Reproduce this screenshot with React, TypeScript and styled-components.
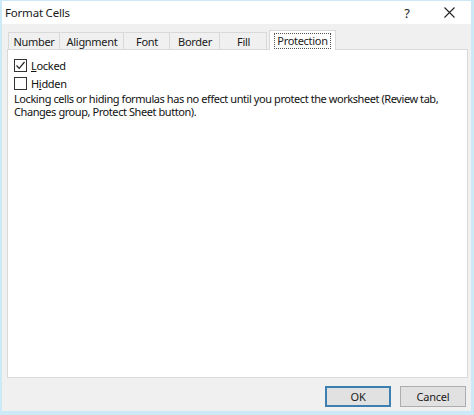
import React from 'react';
import styled, { createGlobalStyle } from 'styled-components';

const GlobalStyle = createGlobalStyle`
    html, body {
        margin: 0;
        padding: 0;
        background: #cbe9f6;
    }
    body {
        font-family: "Noto Sans", "Liberation Sans", sans-serif;
    }
`;

const tabs = [
    { label: 'Number', width: 52 },
    { label: 'Alignment', width: 64 },
    { label: 'Font', width: 46 },
    { label: 'Border', width: 50 },
    { label: 'Fill', width: 47 },
    { label: 'Protection', width: 67, active: true },
];

const CheckIcon: React.FC = () => (
    <svg width="11" height="11" viewBox="0 0 11 11">
        <path d="M1.5 5.5 L4.2 8.3 L9.5 2" fill="none" stroke="#222" strokeWidth="1.2" />
    </svg>
);

const App: React.FC = () => {
    return (
        <>
            <GlobalStyle />
            <Frame>
                <DialogWindow>
                    <TitleBar>
                        <Title>Format Cells</Title>
                        <TitleButton>?</TitleButton>
                        <TitleButton>
                            <svg width="11" height="11" viewBox="0 0 11 11">
                                <path d="M0.5 0.5 L10.5 10.5 M10.5 0.5 L0.5 10.5" stroke="#222" strokeWidth="1.1" />
                            </svg>
                        </TitleButton>
                    </TitleBar>
                    <Body>
                        <TabStrip>
                            {tabs.map((tab) => (
                                <Tab key={tab.label} $width={tab.width} $active={!!tab.active}>
                                    {tab.active ? <FocusLabel>{tab.label}</FocusLabel> : tab.label}
                                </Tab>
                            ))}
                        </TabStrip>
                        <Panel>
                            <CheckRow>
                                <CheckBox><CheckIcon /></CheckBox>
                                <span><u>L</u>ocked</span>
                            </CheckRow>
                            <CheckRow>
                                <CheckBox />
                                <span>H<u>i</u>dden</span>
                            </CheckRow>
                            <Note>
                                <NoteLine>Locking cells or hiding formulas has no effect until you protect the worksheet (Review tab,</NoteLine>
                                <NoteLine>Changes group, Protect Sheet button).</NoteLine>
                            </Note>
                        </Panel>
                        <Footer>
                            <DialogButton $primary>OK</DialogButton>
                            <DialogButton>Cancel</DialogButton>
                        </Footer>
                    </Body>
                </DialogWindow>
            </Frame>
        </>
    );
};

const Frame = styled.div`
    width: 474px;
    height: 415px;
    box-sizing: border-box;
    padding: 1px 3px 4px 2px;
    background: #cbe9f6;
`;

const DialogWindow = styled.div`
    height: 100%;
    display: flex;
    flex-direction: column;
    background: #f0f0f0;
    color: #000;
`;

const TitleBar = styled.div`
    height: 23px;
    flex: none;
    display: flex;
    align-items: center;
    background: #fff;
    padding-left: 3px;
`;

const Title = styled.div`
    flex: 1;
    font-size: 11.5px;
    letter-spacing: -0.2px;
    color: #1a1a1a;
`;

const TitleButton = styled.div`
    width: 40px;
    height: 23px;
    display: flex;
    align-items: center;
    justify-content: center;
    font-size: 13px;
    color: #222;

    &:last-child {
        width: 44px;
    }
`;

const Body = styled.div`
    flex: 1;
    display: flex;
    flex-direction: column;
    padding: 6px 3px 0 5px;
`;

const TabStrip = styled.div`
    display: flex;
    align-items: flex-end;
    height: 19px;
    padding-left: 1px;
    position: relative;
    z-index: 1;
`;

const Tab = styled.div<{ $width: number; $active: boolean }>`
    box-sizing: border-box;
    width: ${(p) => p.$width}px;
    height: ${(p) => (p.$active ? 20 : 17)}px;
    margin-left: ${(p) => (p.$active ? 2 : 0)}px;
    margin-bottom: ${(p) => (p.$active ? -1 : 0)}px;
    display: flex;
    align-items: center;
    justify-content: center;
    font-size: 11px;
    letter-spacing: -0.3px;
    color: #1a1a1a;
    background: ${(p) => (p.$active ? '#fff' : '#f0f0f0')};
    border: 1px solid #d9d9d9;
    border-bottom: none;
    border-left-color: ${(p) => (p.$active ? '#d9d9d9' : 'transparent')};

    &:first-child {
        border-left-color: #d9d9d9;
    }
`;

const FocusLabel = styled.span`
    outline: 1px dotted #555;
    padding: 0 2px;
    line-height: 14px;
`;

const Panel = styled.div`
    flex: 1;
    background: #fff;
    border: 1px solid #d9d9d9;
    padding: 6px 6px;
    font-size: 11px;
    letter-spacing: -0.43px;
    color: #111;
`;

const CheckRow = styled.label`
    display: flex;
    align-items: center;
    gap: 4px;
    height: 18px;
    letter-spacing: -0.3px;
`;

const CheckBox = styled.span`
    box-sizing: border-box;
    width: 13px;
    height: 13px;
    border: 1px solid #333;
    background: #fff;
    display: flex;
    align-items: center;
    justify-content: center;
`;

const Note = styled.div`
    display: flex;
    flex-direction: column;
    white-space: nowrap;
`;

const NoteLine = styled.div`
    height: 13px;
    line-height: 13px;
`;

const Footer = styled.div`
    height: 33px;
    flex: none;
    display: flex;
    justify-content: flex-end;
    align-items: center;
    gap: 9px;
    padding-right: 2px;
    padding-top: 4px;
    box-sizing: border-box;
`;

const DialogButton = styled.button<{ $primary?: boolean }>`
    box-sizing: border-box;
    width: 66px;
    height: 21px;
    padding: 0;
    font-family: inherit;
    font-size: 11px;
    letter-spacing: -0.2px;
    color: #1a1a1a;
    background: #e1e1e1;
    border: ${(p) => (p.$primary ? '2px solid #3d7fb0' : '1px solid #adadad')};
`;

export default App;
